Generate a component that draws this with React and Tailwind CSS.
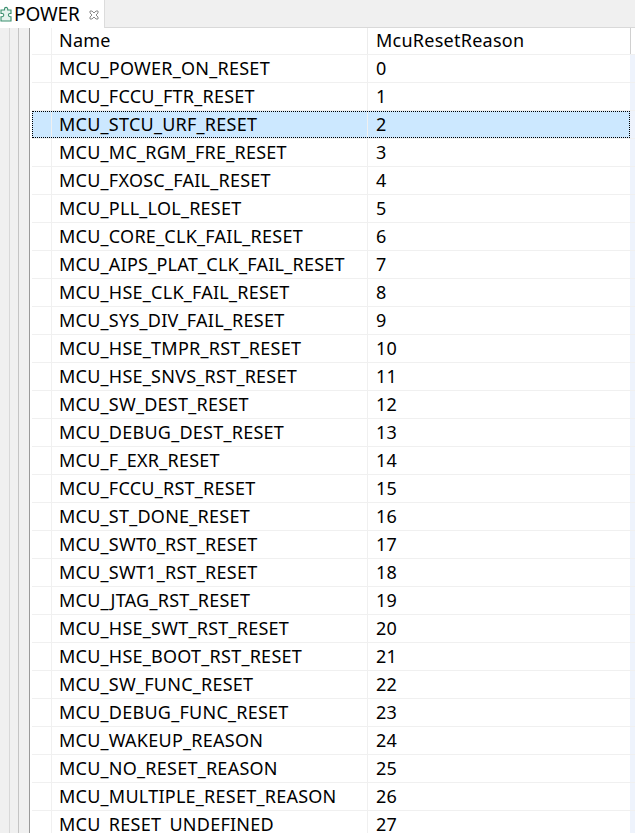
import React from 'react';

const rows = [
  'MCU_POWER_ON_RESET',
  'MCU_FCCU_FTR_RESET',
  'MCU_STCU_URF_RESET',
  'MCU_MC_RGM_FRE_RESET',
  'MCU_FXOSC_FAIL_RESET',
  'MCU_PLL_LOL_RESET',
  'MCU_CORE_CLK_FAIL_RESET',
  'MCU_AIPS_PLAT_CLK_FAIL_RESET',
  'MCU_HSE_CLK_FAIL_RESET',
  'MCU_SYS_DIV_FAIL_RESET',
  'MCU_HSE_TMPR_RST_RESET',
  'MCU_HSE_SNVS_RST_RESET',
  'MCU_SW_DEST_RESET',
  'MCU_DEBUG_DEST_RESET',
  'MCU_F_EXR_RESET',
  'MCU_FCCU_RST_RESET',
  'MCU_ST_DONE_RESET',
  'MCU_SWT0_RST_RESET',
  'MCU_SWT1_RST_RESET',
  'MCU_JTAG_RST_RESET',
  'MCU_HSE_SWT_RST_RESET',
  'MCU_HSE_BOOT_RST_RESET',
  'MCU_SW_FUNC_RESET',
  'MCU_DEBUG_FUNC_RESET',
  'MCU_WAKEUP_REASON',
  'MCU_NO_RESET_REASON',
  'MCU_MULTIPLE_RESET_REASON',
  'MCU_RESET_UNDEFINED',
];

// small green puzzle-piece icon used by the editor tab
const TabIcon = () => (
  <svg width="13" height="16" viewBox="0 0 13 16" className="shrink-0">
    <path
      d="M1 4h3.5V3a1.6 1.6 0 0 1 3.2 0v1H11v3.5h-1a1.6 1.6 0 0 0 0 3.2h1V15H1v-4.3h1.2a1.6 1.6 0 0 0 0-3.2H1z"
      fill="#e6f3ee"
      stroke="#3a8f6e"
      strokeWidth="1.1"
    />
  </svg>
);

const CloseIcon = () => (
  <svg width="10" height="10" viewBox="0 0 10 10">
    <path
      d="M1 1h2l2 2 2-2h2v2L7 5l2 2v2H7L5 7 3 9H1V7l2-2-2-2z"
      fill="none"
      stroke="#8a8a8a"
      strokeWidth="1"
    />
  </svg>
);

const App = () => {
  const selected = 2;

  return (
    <div
      className="w-[635px] h-[833px] overflow-hidden bg-white text-[18px] tracking-[0.25px] text-black"
      style={{ fontFamily: '"Noto Sans", "Open Sans", sans-serif' }}
    >
      {/* Tab bar */}
      <div className="flex h-[28px]">
        <div className="flex items-center w-[105px] bg-white gap-[1px] border-r border-[#dcdcdc]">
          <TabIcon />
          <span className="text-[19px] leading-none tracking-[-0.1px]">POWER</span>
          <span className="ml-[8px] mt-[1px]">
            <CloseIcon />
          </span>
        </div>
        <div className="flex-1 bg-[#f0f0f0] border-b border-[#d9d9d9]"></div>
      </div>

      <div className="flex">
        {/* Left gutter */}
        <div className="flex w-[32px] shrink-0 h-[805px] bg-[#f0f0f0]">
          <div className="w-[10px] border-r border-[#d8d8d8]"></div>
          <div className="w-[9px] border-r border-[#c4c4c4]"></div>
          <div className="w-[11px] border-r border-[#9a9a9a]"></div>
          <div className="w-[2px] bg-white"></div>
        </div>

        {/* Table */}
        <div className="flex-1 flex flex-col">
          <div className="flex h-[26px] items-center">
            <div className="w-[20px] h-full border-r border-[#f0f0f0]"></div>
            <div className="w-[316px] h-full pl-[7px] pb-[2px] flex items-center border-r border-[#ececec]">Name</div>
            <div className="w-[262px] h-full pl-[8px] pb-[2px] flex items-center">McuResetReason</div>
            <div className="w-[5px] h-full border-l border-[#d0d0d0]"></div>
          </div>

          {rows.map((name, i) => (
            <div key={name} className="flex h-[28px] border-t border-[#f0f0f0]">
              <div
                className={
                  i === selected
                    ? 'flex flex-1 h-full bg-[#cce8ff] outline-1 outline-dotted outline-black -outline-offset-1'
                    : 'flex flex-1 h-full'
                }
              >
                <div className="w-[20px] h-full border-r border-[#f0f0f0]"></div>
                <div className="w-[316px] h-full pl-[7px] pb-[1px] flex items-center border-r border-[#f0f0f0]">{name}</div>
                <div className="w-[262px] h-full pl-[8px] pb-[1px] flex items-center">{i}</div>
              </div>
              <div className="w-[5px] h-full bg-[#eef3fc]"></div>
            </div>
          ))}
        </div>
      </div>
    </div>
  );
};

export default App;
